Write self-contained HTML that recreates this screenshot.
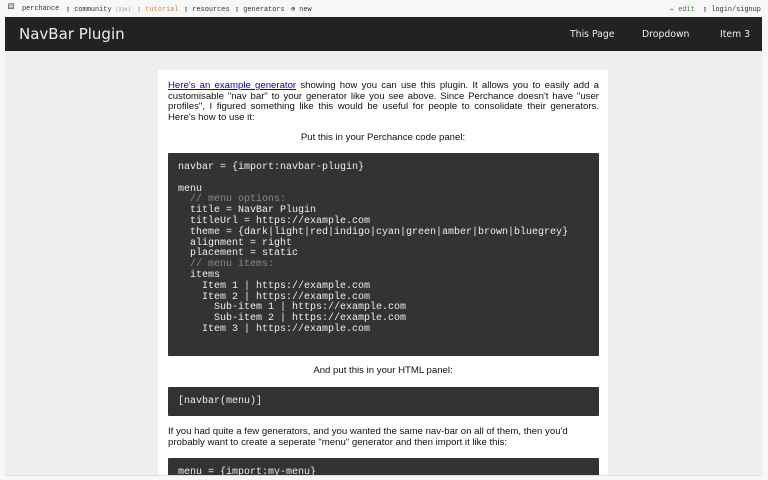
<!DOCTYPE html>
<html><head><meta charset="utf-8"><style>
html,body{margin:0;padding:0;width:768px;height:480px;overflow:hidden;background:#f7f7f7;font-family:"Liberation Sans",sans-serif;position:relative;}
.top{position:absolute;left:0;top:0;width:768px;height:16px;font-family:"Liberation Mono",monospace;font-size:6.9px;color:#333;}
.top span{position:absolute;top:5px;white-space:nowrap}
.outer{position:absolute;left:5px;top:17px;width:757px;height:458px;background:#eeeeee;border-bottom:1px solid #ddd;}
.nav{position:absolute;left:5px;top:17px;width:757px;height:34px;background:#222;color:#fff;}
.nav .t{position:absolute;left:14px;top:8px;font-size:15px;font-family:"DejaVu Sans","Liberation Sans",sans-serif;color:#eee;}
.nav .i{position:absolute;top:12px;font-size:9.3px;font-family:"DejaVu Sans",sans-serif;color:#eee;}
.card{position:absolute;left:158px;top:70px;width:450px;height:405px;background:#fff;overflow:hidden;}
p{margin:0;font-size:9.6px;line-height:10.7px;color:#111;}
.j{position:absolute;left:10px;top:10px;width:431px;text-align:justify;}
.c{position:absolute;left:0;width:450px;text-align:center;}
a{color:#00c;text-decoration:underline}
pre{position:absolute;left:10px;width:431px;margin:0;background:#333;color:#eee;font-family:"Liberation Mono",monospace;font-size:10px;line-height:10.8px;box-sizing:border-box;padding:10px 10px;border-radius:1px;}
.cm{color:#888}
</style></head><body>
<div class="top">
<span style="left:8px;font-size:10px;top:1px">⚄</span>
<span style="left:22px">perchance</span>
<span style="left:66px">▯ community <span style="position:static;font-size:5px;color:#888">(23h)</span></span>
<span style="left:137px;color:#c84">▯ tutorial</span>
<span style="left:184px">▯ resources</span>
<span style="left:235px">▯ generators</span>
<span style="left:291px">⊕ new</span>
<span style="left:670px;color:#383">✏ edit</span>
<span style="left:703px">▯ login/signup</span>
</div>
<div class="outer"></div>
<div class="nav">
<div class="t">NavBar Plugin</div>
<div class="i" style="left:565px">This Page</div>
<div class="i" style="left:637px">Dropdown</div>
<div class="i" style="left:715px">Item 3</div>
</div>
<div class="card">
<p class="j" style="top:11px"><a>Here's an example generator</a> showing how you can use this plugin. It allows you to easily add a customisable "nav bar" to your generator like you see above. Since Perchance doesn't have "user profiles", I figured something like this would be useful for people to consolidate their generators. Here's how to use it:</p>
<p class="c" style="top:63px">Put this in your Perchance code panel:</p>
<pre style="top:83px;height:203px">navbar = {import:navbar-plugin}

menu
  <span class="cm">// menu options:</span>
  title = NavBar Plugin
  titleUrl = https://example.com
  theme = {dark|light|red|indigo|cyan|green|amber|brown|bluegrey}
  alignment = right
  placement = static
  <span class="cm">// menu items:</span>
  items
    Item 1 | https://example.com
    Item 2 | https://example.com
      Sub-item 1 | https://example.com
      Sub-item 2 | https://example.com
    Item 3 | https://example.com</pre>
<p class="c" style="top:296px">And put this in your HTML panel:</p>
<pre style="top:317px;height:29px">[navbar(menu)]</pre>
<p style="position:absolute;left:10px;top:357px;width:431px">If you had quite a few generators, and you wanted the same nav-bar on all of them, then you'd probably want to create a seperate "menu" generator and then import it like this:</p>
<pre style="top:388px;height:40px">menu = {import:my-menu}</pre>
</div>
</body></html>
